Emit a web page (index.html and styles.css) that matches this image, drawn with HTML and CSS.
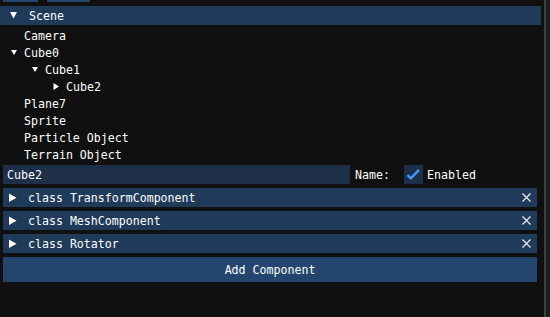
FILE: index.html
```html
<!DOCTYPE html>
<html lang="en">
	<head>
		<title>Scene Inspector</title>
		<meta charset="UTF-8">
		<meta content="width=device-width,initial-scale=1.0" name="viewport">
		<link rel="stylesheet" href="styles.css">
	</head>
	<body>
		<div class="window">
			<div class="content">
				<div class="tabs">
					<span class="tab tabA"></span>
					<span class="tab tabB"></span>
				</div>

				<div class="sceneHeader">
					<svg class="headArrow" width="29" height="19" viewBox="0 0 29 19"><polygon points="10,6 17,6 13.5,12.5" fill="#fff"/></svg>
					<span class="txt">Scene</span>
				</div>

				<ul class="tree">
					<li class="node lvl0"><span class="slot"></span><span class="txt">Camera</span></li>
					<li class="node lvl0"><span class="slot"><svg width="16" height="13" viewBox="0 0 16 13"><polygon points="3,4 9,4 6,9" fill="#fff"/></svg></span><span class="txt">Cube0</span></li>
					<li class="node lvl1"><span class="slot"><svg width="16" height="13" viewBox="0 0 16 13"><polygon points="3,4 9,4 6,9" fill="#fff"/></svg></span><span class="txt">Cube1</span></li>
					<li class="node lvl2"><span class="slot"><svg width="16" height="13" viewBox="0 0 16 13"><polygon points="3.5,3 3.5,10 9,6.5" fill="#fff"/></svg></span><span class="txt">Cube2</span></li>
					<li class="node lvl0"><span class="slot"></span><span class="txt">Plane7</span></li>
					<li class="node lvl0"><span class="slot"></span><span class="txt">Sprite</span></li>
					<li class="node lvl0"><span class="slot"></span><span class="txt">Particle Object</span></li>
					<li class="node lvl0"><span class="slot"></span><span class="txt">Terrain Object</span></li>
				</ul>

				<div class="nameRow">
					<div class="nameInput"><span class="txt">Cube2</span></div>
					<span class="nameLabel txt">Name:</span>
					<span class="checkBox"><svg width="19" height="19" viewBox="0 0 19 19"><polyline points="3.5,10 6.8,13.3 15,4.8" fill="none" stroke="#4296fa" stroke-width="2.4"/></svg></span>
					<span class="checkLabel txt">Enabled</span>
				</div>

				<div class="comp">
					<svg width="25" height="19" viewBox="0 0 25 19"><polygon points="6,5.5 6,14 13.5,9.75" fill="#fff"/></svg>
					<span class="compName txt">class TransformComponent</span>
					<svg class="close" width="9" height="9" viewBox="0 0 9 9"><path d="M0.5,0.5 L8.5,8.5 M8.5,0.5 L0.5,8.5" stroke="#e6e6e6" stroke-width="1.3"/></svg>
				</div>
				<div class="comp">
					<svg width="25" height="19" viewBox="0 0 25 19"><polygon points="6,5.5 6,14 13.5,9.75" fill="#fff"/></svg>
					<span class="compName txt">class MeshComponent</span>
					<svg class="close" width="9" height="9" viewBox="0 0 9 9"><path d="M0.5,0.5 L8.5,8.5 M8.5,0.5 L0.5,8.5" stroke="#e6e6e6" stroke-width="1.3"/></svg>
				</div>
				<div class="comp">
					<svg width="25" height="19" viewBox="0 0 25 19"><polygon points="6,5.5 6,14 13.5,9.75" fill="#fff"/></svg>
					<span class="compName txt">class Rotator</span>
					<svg class="close" width="9" height="9" viewBox="0 0 9 9"><path d="M0.5,0.5 L8.5,8.5 M8.5,0.5 L0.5,8.5" stroke="#e6e6e6" stroke-width="1.3"/></svg>
				</div>

				<div class="addBtn"><span class="txt">Add Component</span></div>
			</div>
			<div class="scrollbar"><div class="grab"></div></div>
		</div>
	</body>
</html>
```

FILE: styles.css
```css
html,body{margin:0;padding:0;background:#101010;}
body{width:550px;height:317px;overflow:hidden;color:#fff;font-family:"DejaVu Sans Mono",monospace;font-size:11.6px;}

.txt{padding-top:2px;line-height:13px;}

.window{display:flex;width:550px;height:317px;}
.content{width:544px;display:flex;flex-direction:column;}
.scrollbar{width:6px;display:flex;background:#1e1e1e;}
.grab{width:2px;background:#3e3e3e;}

.tabs{display:flex;height:2px;margin-bottom:4px;}
.tab{height:2px;background:#24456d;}
.tabA{width:35px;margin-left:3px;}
.tabB{width:43px;margin-left:9px;}

.sceneHeader{width:541px;height:19px;background:#203a5a;display:flex;align-items:center;}
.headArrow{display:block;}

.tree{list-style:none;margin:4px 0 0 0;padding:0;display:flex;flex-direction:column;gap:4px;}
.node{height:13px;display:flex;align-items:center;}
.slot{width:16px;height:13px;display:block;}
.slot svg{display:block;}
.lvl0{padding-left:8px;}
.lvl1{padding-left:29px;}
.lvl2{padding-left:50px;}

.nameRow{display:flex;align-items:center;margin:4px 0 0 3px;height:19px;}
.nameInput{width:343px;height:19px;padding-left:4px;background:#1d2f49;display:flex;align-items:center;}
.nameLabel{margin-left:5px;width:49px;}
.checkBox{width:19px;height:19px;background:#1d2f49;display:block;}
.checkBox svg{display:block;}
.checkLabel{margin-left:4px;}

.comp{margin:4px 0 0 3px;width:534px;height:19px;background:#203a5a;display:flex;align-items:center;}
.comp svg{display:block;}
.compName{flex:1;}
.close{margin-right:6px;}

.addBtn{margin:4px 0 0 3px;width:534px;height:25px;background:#24456d;display:flex;align-items:center;justify-content:center;}
```
